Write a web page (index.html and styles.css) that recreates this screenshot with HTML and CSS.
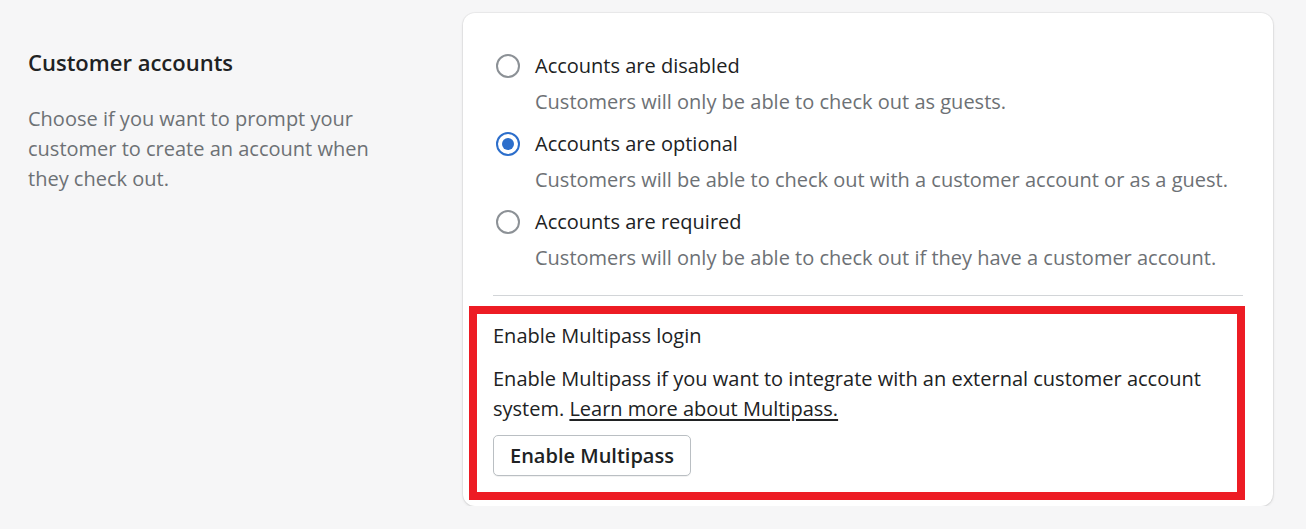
FILE: index.html
```html
<!DOCTYPE html>
<html lang="en">
<head>
<meta charset="utf-8">
<title>Customer accounts</title>
<link rel="stylesheet" href="styles.css">
</head>
<body>
<div class="layout">
  <div class="intro">
    <h2 class="intro-title">Customer accounts</h2>
    <p class="intro-text">Choose if you want to prompt your customer to create an account when they check out.</p>
  </div>
  <div class="card">
    <div class="options">
      <label class="option">
        <span class="radio"></span>
        <span class="option-label">Accounts are disabled</span>
      </label>
      <p class="option-help">Customers will only be able to check out as guests.</p>
      <label class="option">
        <span class="radio radio-checked"></span>
        <span class="option-label">Accounts are optional</span>
      </label>
      <p class="option-help">Customers will be able to check out with a customer account or as a guest.</p>
      <label class="option">
        <span class="radio"></span>
        <span class="option-label">Accounts are required</span>
      </label>
      <p class="option-help">Customers will only be able to check out if they have a customer account.</p>
    </div>
    <div class="divider"></div>
    <div class="multipass">
      <p class="mp-title">Enable Multipass login</p>
      <p class="mp-text">Enable Multipass if you want to integrate with an external customer account system. <a class="mp-link" href="#">Learn more about Multipass.</a></p>
      <button class="btn" type="button">Enable Multipass</button>
    </div>
  </div>
</div>
</body>
</html>
```
FILE: styles.css
```css
html, body {
  margin: 0;
  padding: 0;
}
body {
  background: #f6f6f7;
  font-family: "Open Sans", "Noto Sans", sans-serif;
  color: #202223;
  font-size: 20px;
}
.layout {
  display: grid;
  grid-template-columns: 435px 810px;
  padding: 13px 0 0 28px;
}
.intro-title {
  margin: 35px 0 0;
  font-size: 22px;
  font-weight: 600;
  line-height: 28px;
}
.intro-text {
  margin: 28px 0 0;
  color: #6d7175;
  line-height: 30px;
  width: 360px;
}
.card {
  background: #fff;
  border-radius: 12px;
  box-shadow: 0 0 0 1px rgba(0,0,0,0.04), 0 1px 3px rgba(0,0,0,0.12);
  padding: 34px 30px 6px 30px;
  height: 493px;
  box-sizing: border-box;
}
.options {
  display: flex;
  flex-direction: column;
}
.option {
  display: flex;
  align-items: center;
  gap: 15px;
  height: 38px;
  padding-left: 3px;
}
.radio {
  width: 20px;
  height: 20px;
  border: 2px solid #8c9196;
  border-radius: 50%;
  flex: none;
  box-sizing: content-box;
  position: relative;
}
.radio-checked {
  border-color: #2c6ecb;
}
.radio-checked::after {
  content: "";
  position: absolute;
  left: 4px;
  top: 4px;
  width: 12px;
  height: 12px;
  border-radius: 50%;
  background: #2c6ecb;
}
.option-label {
  line-height: 38px;
}
.option-help {
  margin: 0 0 2px 42px;
  color: #6d7175;
  line-height: 34px;
  padding-bottom: 4px;
}
.divider {
  height: 1px;
  background: #d2d5d8;
  margin-top: 14px;
}
.multipass {
  margin: 10px -2px 0 -24px;
  border: 8px solid #ed1c24;
  padding: 7px 16px 16px 16px;
  height: 194px;
  box-sizing: border-box;
}
.mp-title {
  margin: 0;
  line-height: 30px;
}
.mp-text {
  margin: 13px 0 11px;
  line-height: 30px;
}
.mp-link {
  color: #202223;
  text-decoration: underline;
  text-underline-offset: 3px;
}
.btn {
  font-family: inherit;
  font-size: 20px;
  font-weight: 600;
  color: #202223;
  background: #fff;
  border: 1px solid #babfc3;
  border-radius: 5px;
  height: 41px;
  padding: 0 16px;
  box-shadow: 0 1px 0 rgba(0,0,0,0.05);
}
```
